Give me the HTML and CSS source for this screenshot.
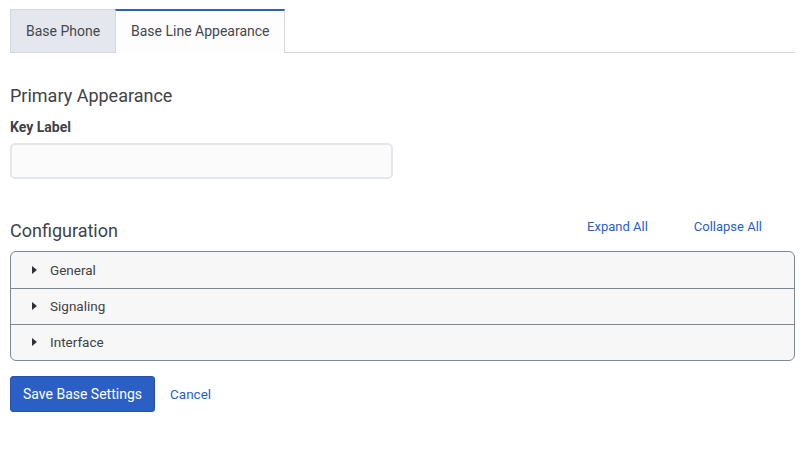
FILE: index.html
```html
<!DOCTYPE html>
<html>
<head>
<meta charset="utf-8">
<link rel="stylesheet" href="styles.css">
</head>
<body>
<div class="page">
  <div class="tabs">
    <div class="tab">Base Phone</div>
    <div class="tab active">Base Line Appearance</div>
    <div class="tab-fill"></div>
  </div>
  <h2 class="heading primary">Primary Appearance</h2>
  <label class="field-label">Key Label</label>
  <input class="text-input" type="text">
  <div class="config-head">
    <h2 class="heading">Configuration</h2>
    <div class="config-links">
      <a class="link">Expand All</a>
      <a class="link">Collapse All</a>
    </div>
  </div>
  <div class="accordion">
    <div class="acc-row"><span class="caret"></span>General</div>
    <div class="acc-row"><span class="caret"></span>Signaling</div>
    <div class="acc-row"><span class="caret"></span>Interface</div>
  </div>
  <div class="actions">
    <button class="btn-primary">Save Base Settings</button>
    <a class="link cancel">Cancel</a>
  </div>
</div>
</body>
</html>
```
FILE: styles.css
```css
* { box-sizing: border-box; }
body {
  margin: 0;
  background: #fff;
  font-family: Roboto, "Liberation Sans", sans-serif;
  color: #3f4246;
}
.page {
  padding: 9px 10px 0 10px;
}
.tabs {
  display: flex;
  height: 44px;
}
.tab {
  font-size: 14px;
  color: #44474c;
  padding: 0 0 0 15px;
  white-space: nowrap;
  display: flex;
  align-items: center;
  background: #e4e8ee;
  border: 1px solid #d3d8de;
  border-right: none;
  width: 105px;
}
.tab.active {
  width: 170px;
  background: #fdfdfd;
  border: 1px solid #d3d8de;
  border-top: 2px solid #2a5fc4;
  border-bottom: none;
  padding-bottom: 2px;
}
.tab-fill {
  flex: 1;
  border-bottom: 1px solid #d3d8de;
}
.heading {
  font-size: 18px;
  font-weight: 400;
  color: #3f4246;
  margin: 0;
}
.primary {
  margin-top: 31px;
  line-height: 24px;
}
.field-label {
  display: block;
  font-size: 14px;
  font-weight: 700;
  color: #3f4246;
  margin-top: 11px;
  line-height: 16px;
}
.text-input {
  display: block;
  margin-top: 8px;
  width: 383px;
  height: 36px;
  border: 2px solid #e3e6ea;
  border-radius: 5px;
  background: #fbfbfb;
}
.config-head {
  display: flex;
  align-items: flex-end;
  margin-top: 40px;
  height: 22px;
}
.config-head .heading { line-height: 22px; flex: 1; position: relative; top: 1px; }
.config-links {
  display: flex;
  gap: 46px;
  padding-right: 33px;
  padding-bottom: 7px;
}
.link {
  color: #2a5fc4;
  font-size: 13px;
  cursor: pointer;
}
.accordion {
  margin-top: 10px;
  border: 1px solid #7d8896;
  border-radius: 6px;
  background: #f7f7f7;
  overflow: hidden;
}
.acc-row {
  height: 36px;
  display: flex;
  align-items: center;
  padding-left: 21px;
  padding-bottom: 1px;
  font-size: 13.5px;
  color: #3f4246;
  border-top: 1px solid #7d8896;
}
.acc-row:first-child { border-top: none; }
.caret {
  width: 0;
  height: 0;
  border-top: 4px solid transparent;
  border-bottom: 4px solid transparent;
  border-left: 5px solid #2e3236;
  margin-right: 13px;
}
.actions {
  display: flex;
  align-items: center;
  margin-top: 15px;
  gap: 15px;
}
.btn-primary {
  background: #2b5fc6;
  color: #fff;
  border: 1px solid #2452ad;
  border-radius: 3px;
  height: 36px;
  width: 145px;
  font-family: Roboto, "Liberation Sans", sans-serif;
  font-size: 14px;
  padding: 0;
}
.cancel { font-size: 13.5px; }
```
